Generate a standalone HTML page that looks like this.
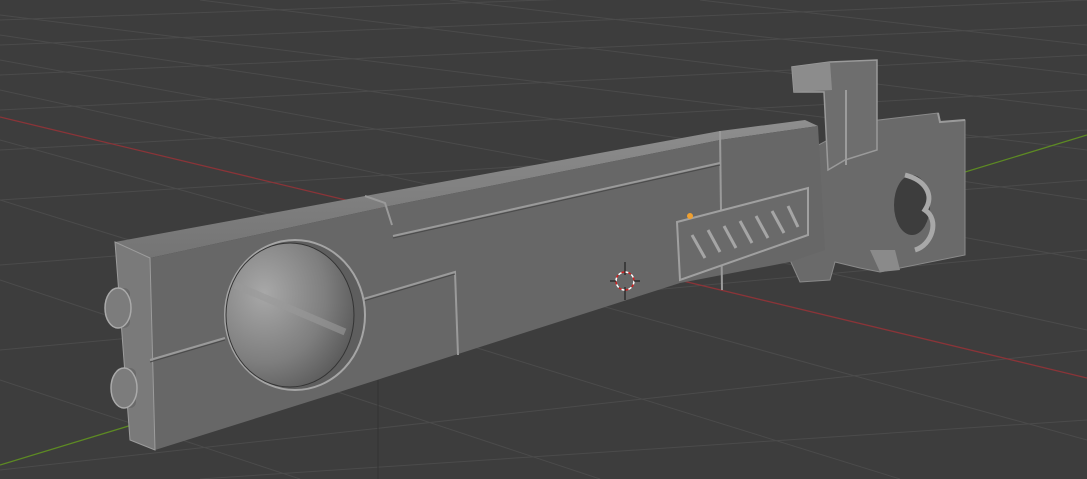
<!DOCTYPE html>
<html><head><style>html,body{margin:0;padding:0;background:#3d3d3d;overflow:hidden}svg{display:block}</style></head>
<body>
<svg width="1087" height="479" viewBox="0 0 1087 479" xmlns="http://www.w3.org/2000/svg">
<defs>
<radialGradient id="sph" cx="0.3" cy="0.35" r="0.8">
<stop offset="0" stop-color="#a8a8a8"/><stop offset="0.6" stop-color="#7e7e7e"/><stop offset="1" stop-color="#555"/>
</radialGradient>
<linearGradient id="top" x1="0" y1="0" x2="0" y2="1"><stop offset="0" stop-color="#8e8e8e"/><stop offset="1" stop-color="#747474"/></linearGradient>
</defs>
<rect width="1087" height="479" fill="#3d3d3d"/>
<g stroke="#4b4b4b" stroke-width="1" fill="none">
<path d="M0,20 L1087,-20 M0,45 L1087,0 M0,75 L1087,25 M0,110 L1087,55 M0,150 L1087,90 M0,200 L1087,130 M0,265 L1087,180 M0,350 L1087,250 M0,470 L1087,350 M200,479 L1087,420"/>
<path d="M0,60 L1087,260 M0,35 L1087,200 M0,15 L1087,150 M0,90 L1087,330 M0,140 L1087,440 M0,200 L900,479 M0,280 L600,479 M0,380 L300,479 M200,0 L1087,110 M450,0 L1087,75 M700,0 L1087,45"/>
</g>
<line x1="0" y1="117" x2="1087" y2="378" stroke="#8a3438" stroke-width="1.3"/>
<line x1="0" y1="465" x2="1087" y2="135" stroke="#5d8a23" stroke-width="1.3"/>
<line x1="378" y1="380" x2="378" y2="479" stroke="#333" stroke-width="1"/>
<!-- rear stock -->
<polygon points="862,122 938,113 940,122 965,120 965,255 880,272 860,268 835,262 830,280 800,282 790,260 790,160" fill="#6a6a6a" stroke="#8a8a8a" stroke-width="1"/>
<path d="M938,113 L940,122 L965,120" fill="none" stroke="#9a9a9a" stroke-width="2"/>
<ellipse cx="912" cy="205" rx="18" ry="30" fill="#3d3d3d"/>
<path d="M905,175 C925,180 935,195 925,210 C940,220 932,245 915,250" fill="none" stroke="#a8a8a8" stroke-width="5"/>
<polygon points="870,250 880,272 900,270 895,250" fill="#8a8a8a"/>
<!-- sight -->
<polygon points="792,67 830,62 877,60 877,150 845,160 828,170 824,92 794,92" fill="#6e6e6e" stroke="#9a9a9a" stroke-width="1.5"/>
<polygon points="792,67 830,62 832,90 794,92" fill="#8c8c8c"/>
<line x1="846" y1="90" x2="846" y2="165" stroke="#9c9c9c" stroke-width="2"/>
<!-- top face -->
<polygon points="115,242 365,196 720,131 805,120 818,126 720,140 380,208 150,258" fill="url(#top)"/>
<!-- front face -->
<polygon points="150,258 380,208 720,140 818,126 825,250 790,262 680,283 455,355 330,395 155,450" fill="#676767"/>
<!-- end cap -->
<polygon points="115,242 150,258 155,450 130,440" fill="#7a7a7a" stroke="#9c9c9c" stroke-width="1"/>
<!-- panel lines -->
<g stroke="#9a9a9a" stroke-width="2" fill="none">
<path d="M365,196 L385,203 L392,225"/>
<path d="M393,236 L720,163"/>
<path d="M720,131 L722,290"/>
<path d="M150,360 L225,338"/>
<path d="M360,300 L455,272 L458,355"/>
</g>
<g stroke="#4a4a4a" stroke-width="1" fill="none">
<path d="M393,238 L720,165"/><path d="M150,362 L225,340"/><path d="M360,302 L455,274"/>
</g>
<!-- vent -->
<polygon points="677,222 808,188 808,235 680,280" fill="#6a6a6a" stroke="#a0a0a0" stroke-width="2"/>
<g stroke="#a5a5a5" stroke-width="3" fill="none">
<path d="M692,235 L705,258"/><path d="M708,230 L720,252"/><path d="M724,226 L736,248"/><path d="M740,221 L752,243"/><path d="M756,216 L768,238"/><path d="M772,211 L784,233"/><path d="M788,206 L798,227"/>
</g>
<circle cx="690" cy="216" r="3" fill="#f0a030"/>
<!-- sphere -->
<ellipse cx="295" cy="315" rx="70" ry="75" fill="#5e5e5e" stroke="#a5a5a5" stroke-width="2"/>
<ellipse cx="290" cy="315" rx="64" ry="72" fill="url(#sph)" stroke="#333" stroke-width="1"/>
<path d="M235,285 L345,332" stroke="#9a9a9a" stroke-width="7" fill="none" opacity="0.6"/>
<!-- buttons -->
<rect x="112" y="288" width="18" height="40" rx="6" fill="#6a6a6a"/>
<ellipse cx="118" cy="308" rx="13" ry="20" fill="#7c7c7c" stroke="#aaa" stroke-width="1.5"/>
<rect x="118" y="368" width="18" height="40" rx="6" fill="#6a6a6a"/>
<ellipse cx="124" cy="388" rx="13" ry="20" fill="#7c7c7c" stroke="#aaa" stroke-width="1.5"/>
<!-- cursor -->
<circle cx="625" cy="281" r="9" fill="none" stroke="#fff" stroke-width="1.5" stroke-dasharray="4 3"/>
<circle cx="625" cy="281" r="9" fill="none" stroke="#d02020" stroke-width="1.5" stroke-dasharray="3 4" stroke-dashoffset="3.5"/>
<path d="M625,262 V275 M625,287 V300 M610,281 H616 M634,281 H640" stroke="#111" stroke-width="1"/>
</svg>
</body></html>
